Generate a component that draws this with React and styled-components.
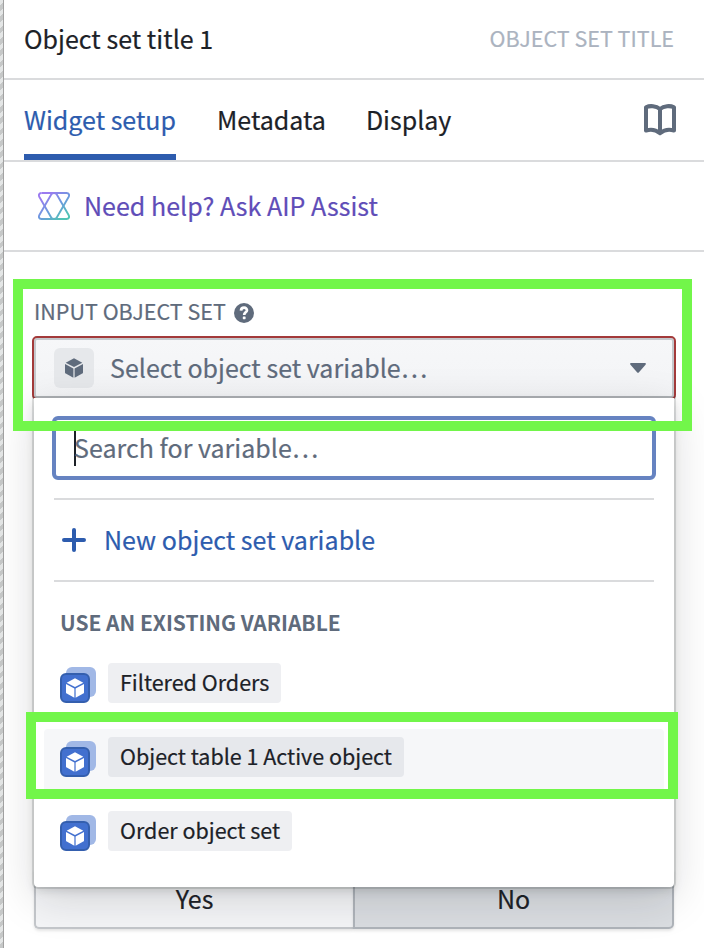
import React from "react";
import styled, { createGlobalStyle } from "styled-components";

const COLORS = {
  text: "#1c2127",
  muted: "#5f6b7c",
  faint: "#abb3bf",
  line: "#dadbdd",
  blue: "#2d5cae",
  purple: "#5f4db8",
  highlight: "#72f64a",
};

const VARIABLES = [
  { name: "Filtered Orders" },
  { name: "Object table 1 Active object", active: true },
  { name: "Order object set" },
];

const BookIcon = () => (
  <svg width="32" height="32" viewBox="0 0 32 32" fill="none">
    <path
      d="M2 3.200C6 1.400 12 1.800 16 5C20 1.800 26 1.400 30 3.200V26.500C25.500 25 20 25.800 16 29.200C12 25.800 6.500 25 2 26.500Z"
      stroke={COLORS.muted}
      strokeWidth="4"
      strokeLinejoin="round"
    />
    <path d="M16 5V30" stroke={COLORS.muted} strokeWidth="4" />
  </svg>
);

const AssistIcon = () => (
  <svg width="32" height="28" viewBox="0 0 32 28" fill="none">
    <defs>
      <linearGradient id="aip" x1="4" y1="2" x2="23" y2="28" gradientUnits="userSpaceOnUse">
        <stop offset="0.1" stopColor="#9b7bf0" />
        <stop offset="0.55" stopColor="#6c9ade" />
        <stop offset="1" stopColor="#50c4b4" />
      </linearGradient>
    </defs>
    <g stroke="url(#aip)" strokeWidth="1.9" strokeLinejoin="round">
      <path d="M3.500 1H28.500Q32.200 1.500 30.600 5L18.500 26Q17.500 27 16 27H3.500Q-0.200 26.500 1.400 23L13.500 2Q14.500 1 16 1" />
      <path d="M3.500 1Q-0.200 1.500 1.400 5L13.500 26Q14.500 27 16 27H28.500Q32.200 26.500 30.600 23L18.500 2Q17.500 1 16 1" />
    </g>
  </svg>
);

const HelpIcon = () => (
  <svg width="20" height="20" viewBox="0 0 20 20" fill="none">
    <circle cx="10" cy="10" r="10" fill={COLORS.muted} />
    <path
      d="M7 7.600C7.200 3.600 13.300 3.900 12.900 7.500C12.600 9.400 10.200 9.400 10.200 12"
      stroke="#fff"
      strokeWidth="2.800"
    />
    <rect x="8.800" y="13.400" width="2.800" height="2.800" rx="0.6" fill="#fff" />
  </svg>
);

const CubeIcon = ({ color = COLORS.muted }) => (
  <svg width="18" height="20" viewBox="0 0 18 20" fill={color}>
    <path d="M9 0.300L17.300 4.700L9 9L0.700 4.700Z" />
    <path d="M0 6L8.400 10.400V19.700L0.700 15.600Q0 15.200 0 14.400Z" />
    <path d="M18 6L9.600 10.400V19.700L17.300 15.600Q18 15.200 18 14.400Z" />
  </svg>
);

const PlusIcon = () => (
  <svg width="24" height="24" viewBox="0 0 24 24">
    <path d="M12 2V22M2 12H22" stroke={COLORS.blue} strokeWidth="4" strokeLinecap="round" />
  </svg>
);

const CaretIcon = () => (
  <svg width="16" height="10" viewBox="0 0 16 10">
    <path d="M1 0H15Q16.500 0.500 15.500 1.700L9 9.300Q8 10.300 7 9.300L0.500 1.700Q-0.500 0.500 1 0Z" fill={COLORS.muted} />
  </svg>
);

const App = () => {
  return (
    <>
      <GlobalStyle />
      <Screen>
        <Gutter />
        <Panel>
          <Header>
            <Title>Object set title 1</Title>
            <WidgetType>OBJECT SET TITLE</WidgetType>
          </Header>
          <TabBar>
            <Tab $active>Widget setup</Tab>
            <Tab>Metadata</Tab>
            <Tab>Display</Tab>
            <DocsButton>
              <BookIcon />
            </DocsButton>
          </TabBar>
          <AssistRow>
            <AssistIcon />
            <AssistText>Need help? Ask AIP Assist</AssistText>
          </AssistRow>
          <Section>
            <SectionLabel>
              <LabelText>INPUT OBJECT SET</LabelText>
              <HelpIcon />
            </SectionLabel>
            <SelectButton>
              <IconTile>
                <CubeIcon />
              </IconTile>
              <SelectText>Select object set variable…</SelectText>
              <CaretIcon />
            </SelectButton>
            <Toggle>
              <ToggleOption>Yes</ToggleOption>
              <ToggleOption $selected>No</ToggleOption>
            </Toggle>
          </Section>
        </Panel>
        <Menu>
          <SearchBox>
            <Cursor />
            <Placeholder>Search for variable…</Placeholder>
          </SearchBox>
          <NewVariable>
            <PlusIcon />
            <NewVariableText>New object set variable</NewVariableText>
          </NewVariable>
          <MenuHeading>USE AN EXISTING VARIABLE</MenuHeading>
          {VARIABLES.map(({ name, active }) => (
            <VariableRow key={name} $active={active}>
              <SetIcon>
                <SetFront>
                  <CubeIcon color="#fff" />
                </SetFront>
              </SetIcon>
              <VariableTag $active={active}>{name}</VariableTag>
            </VariableRow>
          ))}
        </Menu>
        <Highlight $top={279} $left={13} $width={679} $height={152} />
        <Highlight $top={712} $left={26} $width={652} $height={87} />
      </Screen>
    </>
  );
};

const GlobalStyle = createGlobalStyle`
  * {
    box-sizing: border-box;
  }

  body {
    margin: 0;
    overflow: hidden;
    color: ${COLORS.text};
    font-family: "Noto Sans CJK JP", "Open Sans", sans-serif;
    font-size: 25px;
    line-height: 36px;
    background: #fff;
    -webkit-text-stroke: 0.2px;
  }

  svg {
    display: block;
    flex: none;
  }
`;

const Screen = styled.div`
  position: relative;
  display: flex;
  width: 704px;
  height: 948px;
  overflow: hidden;
`;

const Gutter = styled.div`
  width: 4px;
  border-right: 1px solid #a2a2a2;
  background: repeating-linear-gradient(135deg, #e4e6e6 0 4px, #c6c8c8 4px 8px);
`;

const Panel = styled.div`
  flex: 1;
  display: flex;
  flex-direction: column;
  white-space: nowrap;
`;

const Header = styled.div`
  display: flex;
  justify-content: space-between;
  align-items: center;
  height: 80px;
  padding: 0 30px 2px 20px;
  border-bottom: 2px solid ${COLORS.line};
`;

const Title = styled.div`
  letter-spacing: 0.03px;
`;

const WidgetType = styled.div`
  color: ${COLORS.faint};
  font-size: 21.5px;
`;

const TabBar = styled.div`
  display: flex;
  gap: 41px;
  height: 82px;
  padding: 0 28px 0 20px;
  border-bottom: 2px solid ${COLORS.line};
`;

const Tab = styled.div`
  padding-top: 21px;
  color: ${({ $active }) => ($active ? COLORS.blue : COLORS.text)};
  border-bottom: 6px solid ${({ $active }) => ($active ? COLORS.blue : "transparent")};

  & + & {
    margin-right: -1px;
  }
`;

const DocsButton = styled.div`
  display: flex;
  align-items: center;
  margin-left: auto;
`;

const AssistRow = styled.div`
  display: flex;
  align-items: center;
  gap: 14px;
  height: 90px;
  padding-left: 34px;
  color: ${COLORS.purple};
  border-bottom: 2px solid ${COLORS.line};
`;

const AssistText = styled.div`
  padding-bottom: 2px;
  letter-spacing: 0.03px;
`;

const Section = styled.div`
  flex: 1;
  display: flex;
  flex-direction: column;
  padding: 42px 28px 19px;
`;

const SectionLabel = styled.div`
  display: flex;
  align-items: center;
  gap: 8px;
  height: 36px;
  padding: 1px 0 0 2px;
  color: ${COLORS.muted};
  font-size: 21.5px;
`;

const LabelText = styled.div`
  padding-bottom: 3px;
`;

const SelectButton = styled.div`
  display: flex;
  align-items: center;
  height: 64px;
  margin-top: 6px;
  padding: 0 28px 0 20px;
  color: ${COLORS.muted};
  border: 2px solid #a33a3a;
  border-radius: 5px;
  background: linear-gradient(#f6f7f9, #f3f4f6);
  box-shadow: inset 0 0 0 2px #c5c8cc;
`;

const IconTile = styled.div`
  display: flex;
  justify-content: center;
  align-items: center;
  width: 40px;
  height: 40px;
  margin-right: 16px;
  border-radius: 6px;
  background: #e6e8eb;
`;

const SelectText = styled.div`
  flex: 1;
  padding-bottom: 2px;
  letter-spacing: 0.03px;
`;

const Toggle = styled.div`
  display: flex;
  height: 60px;
  margin: auto 2px 0;
  text-align: center;
`;

const ToggleOption = styled.div`
  flex: 1;
  padding-top: 9px;
  border: 2px solid ${({ $selected }) => ($selected ? "#afb4ba" : "#c4c7cb")};
  border-right-width: ${({ $selected }) => ($selected ? "2px" : "0")};
  border-radius: ${({ $selected }) => ($selected ? "0 0 5px 0" : "0 0 0 5px")};
  background: ${({ $selected }) => ($selected ? "#dadde1" : "#f4f5f7")};
  box-shadow: 0 2px 3px rgba(0, 0, 0, 0.1);
`;

// The open menu hangs over the select button and the toggle below it
const Menu = styled.div`
  position: absolute;
  top: 398px;
  left: 34px;
  width: 640px;
  height: 489px;
  padding: 18px 10px 0 10px;
  white-space: nowrap;
  background: #fff;
  border-radius: 0 0 4px 4px;
  box-shadow: 0 0 0 2px rgba(17, 20, 24, 0.13), 0 4px 8px rgba(17, 20, 24, 0.13),
    0 12px 44px rgba(17, 20, 24, 0.15);
`;

const SearchBox = styled.div`
  display: flex;
  align-items: center;
  height: 64px;
  margin: 0 8px;
  padding-left: 18px;
  color: ${COLORS.muted};
  border: 4px solid #6683c1;
  border-radius: 6px;
`;

const Cursor = styled.div`
  width: 2px;
  height: 36px;
  margin-right: -2px;
  background: ${COLORS.text};
`;

const Placeholder = styled.div`
  padding-bottom: 2px;
  letter-spacing: 0.03px;
`;

const NewVariable = styled.div`
  display: flex;
  align-items: center;
  gap: 18px;
  height: 84px;
  margin: 18px 10px 0;
  padding-left: 8px;
  color: ${COLORS.blue};
  border-top: 2px solid ${COLORS.line};
  border-bottom: 2px solid ${COLORS.line};
`;

const NewVariableText = styled.div`
  padding-bottom: 2px;
  letter-spacing: 0.03px;
`;

const MenuHeading = styled.div`
  height: 73px;
  padding: 22px 0 0 16px;
  color: ${COLORS.muted};
  font-size: 21px;
  font-weight: 700;
  letter-spacing: -0.04px;
  -webkit-text-stroke: 0;
`;

const VariableRow = styled.div`
  display: flex;
  align-items: flex-start;
  gap: 12px;
  height: 64px;
  margin-bottom: 10px;
  padding: 8px 16px;
  border-radius: 4px;
  background: ${({ $active }) => ($active ? "#f6f7f9" : "transparent")};
`;

const SetIcon = styled.div`
  position: relative;
  display: flex;
  align-items: flex-end;
  width: 36px;
  height: 36px;
  margin-top: 4px;

  &::before {
    content: "";
    position: absolute;
    top: 0;
    right: 0;
    width: 30px;
    height: 30px;
    border-radius: 6px;
    background: #a1b8e6;
  }
`;

const SetFront = styled.div`
  position: relative;
  display: flex;
  justify-content: center;
  align-items: center;
  width: 30px;
  height: 30px;
  border: 2px solid #345fae;
  border-radius: 6px;
  background: #4270cf;
`;

const VariableTag = styled.div`
  height: 40px;
  padding: 1px 12px 0;
  font-size: 21.5px;
  border-radius: 4px;
  background: ${({ $active }) => ($active ? "#e6e8ec" : "#eeeff2")};
`;

const Highlight = styled.div`
  position: absolute;
  top: ${({ $top }) => $top}px;
  left: ${({ $left }) => $left}px;
  width: ${({ $width }) => $width}px;
  height: ${({ $height }) => $height}px;
  border: 10px solid ${COLORS.highlight};
  pointer-events: none;
`;

export default App;
